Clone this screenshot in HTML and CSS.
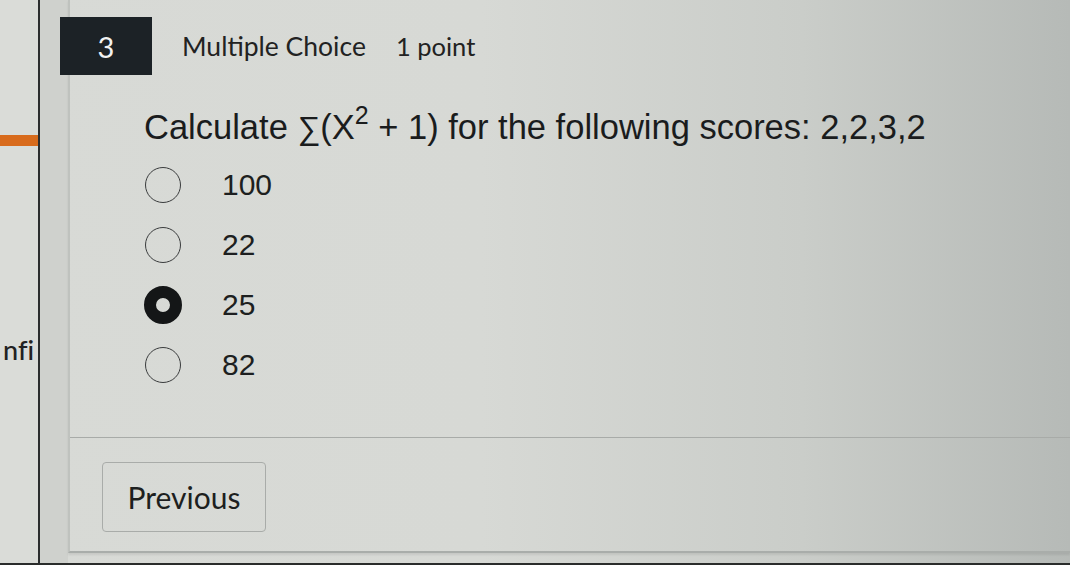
FILE: index.html
```html
<!DOCTYPE html>
<html>
<head>
<meta charset="utf-8">
<link rel="stylesheet" href="styles.css">
</head>
<body>
<div class="screen">
  <aside class="sidebar">
    <div class="accent"></div>
    <div class="side-label">nfi</div>
  </aside>
  <div class="gutter"></div>
  <main class="card">
    <header class="q-head">
      <div class="badge">3</div>
      <span class="q-type">Multiple Choice</span>
      <span class="q-points">1 point</span>
    </header>
    <p class="prompt">Calculate <span class="sigma">∑</span>(X<sup>2</sup> + 1) for the following scores: 2,2,3,2</p>
    <ul class="options">
      <li class="opt"><span class="radio"></span><span class="label">100</span></li>
      <li class="opt"><span class="radio"></span><span class="label">22</span></li>
      <li class="opt"><span class="radio checked"></span><span class="label">25</span></li>
      <li class="opt"><span class="radio"></span><span class="label">82</span></li>
    </ul>
    <div class="divider"></div>
    <footer class="nav">
      <button class="btn">Previous</button>
    </footer>
  </main>
</div>
</body>
</html>
```
FILE: styles.css
```css
html, body {
  margin: 0;
  padding: 0;
}
body {
  width: 1070px;
  height: 565px;
  overflow: hidden;
  background: #2a2c2b;
  font-family: "Liberation Sans", Arial, sans-serif;
  color: #1d1f20;
}
.screen {
  display: flex;
  height: 563px;
  background: linear-gradient(90deg, #d8dad6 0%, #d7d9d5 45%, #cacdc9 75%, #b6bab7 100%);
}
.sidebar {
  width: 38px;
  flex: none;
  border-right: 2px solid #2b2d2e;
  background: #dadcd8;
  overflow: hidden;
  display: flex;
  flex-direction: column;
}
.accent {
  height: 11px;
  background: #d86b1c;
  margin-top: 135px;
}
.side-label {
  margin-top: 187px;
  margin-left: 3px;
  white-space: nowrap;
  font-family: Lato, sans-serif;
  font-size: 27px;
  font-weight: 500;
  font-variant-ligatures: none;
  color: #222;
}
.gutter {
  width: 28px;
  flex: none;
  background: #cfd1cd;
}
.card {
  flex: 1;
  border-left: 2px solid #bfc2be;
  border-bottom: 2px solid #a9adaa;
  height: 551px;
  display: flex;
  flex-direction: column;
  box-shadow: 0 2px 2px rgba(0,0,0,0.08);
}
.q-head {
  display: flex;
  align-items: center;
  margin-top: 17px;
  margin-left: -10px;
  font-family: Lato, sans-serif;
  font-size: 26.5px;
  color: #222;
}
.badge {
  width: 92px;
  height: 58px;
  background: #1c2226;
  color: #f2f2f2;
  display: flex;
  align-items: center;
  justify-content: center;
  font-size: 29px;
  margin-right: 30px;
}
.q-type {
  margin-right: 30px;
}
.q-points {
  font-size: 25.5px;
}
.prompt {
  margin: 32px 0 0 74px;
  font-size: 34.5px;
  line-height: 40px;
  color: #1a1c1d;
}
.sigma {
  font-size: 32px;
}
.prompt sup {
  font-size: 25px;
  line-height: 0;
  vertical-align: 15px;
}
.options {
  list-style: none;
  margin: 19px 0 0 75px;
  padding: 0;
  display: flex;
  flex-direction: column;
  gap: 24px;
}
.opt {
  display: flex;
  align-items: center;
  height: 36px;
}
.radio {
  width: 36px;
  height: 36px;
  border: 1.5px solid #3a3c3d;
  border-radius: 50%;
  box-sizing: border-box;
  flex: none;
  margin-right: 41px;
  background: transparent;
}
.radio.checked {
  width: 38px;
  height: 38px;
  border: 12.5px solid #141617;
  margin-left: -1px;
  margin-right: 40px;
}
.label {
  font-size: 30px;
  color: #1d1f20;
}
.divider {
  margin-top: 54px;
  height: 1px;
  background: #a8aba8;
}
.nav {
  padding: 24px 0 0 32px;
}
.btn {
  width: 164px;
  height: 70px;
  background: transparent;
  border: 1px solid #a9aca9;
  border-radius: 4px;
  font-family: Lato, sans-serif;
  font-size: 30px;
  color: #1d1f20;
  padding: 0;
}
```
